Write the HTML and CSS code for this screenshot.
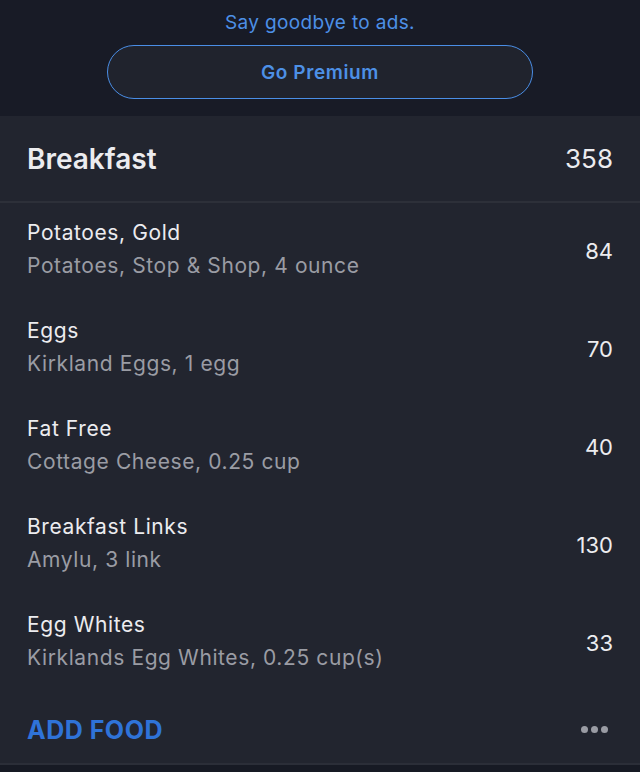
FILE: index.html
```html
<!DOCTYPE html>
<html>
<head>
<meta charset="utf-8">
<link rel="stylesheet" href="styles.css">
</head>
<body>
<div class="promo">
  <div class="promo-text">Say goodbye to ads.</div>
  <div class="promo-btn">Go Premium</div>
</div>
<div class="card">
  <div class="card-head">
    <div class="meal">Breakfast</div>
    <div class="total">358</div>
  </div>
  <div class="items">
    <div class="item">
      <div class="info"><div class="name">Potatoes, Gold</div><div class="desc">Potatoes, Stop &amp; Shop, 4 ounce</div></div>
      <div class="cal">84</div>
    </div>
    <div class="item">
      <div class="info"><div class="name">Eggs</div><div class="desc">Kirkland Eggs, 1 egg</div></div>
      <div class="cal">70</div>
    </div>
    <div class="item">
      <div class="info"><div class="name">Fat Free</div><div class="desc">Cottage Cheese, 0.25 cup</div></div>
      <div class="cal">40</div>
    </div>
    <div class="item">
      <div class="info"><div class="name">Breakfast Links</div><div class="desc">Amylu, 3 link</div></div>
      <div class="cal">130</div>
    </div>
    <div class="item">
      <div class="info"><div class="name">Egg Whites</div><div class="desc">Kirklands Egg Whites, 0.25 cup(s)</div></div>
      <div class="cal">33</div>
    </div>
  </div>
  <div class="card-foot">
    <div class="add">ADD FOOD</div>
    <div class="dots"><span></span><span></span><span></span></div>
  </div>
</div>
<div class="after"></div>
</body>
</html>
```
FILE: styles.css
```css
* { box-sizing: border-box; }
html, body { margin: 0; padding: 0; }
body {
  width: 640px;
  height: 772px;
  overflow: hidden;
  background: #171a24;
  font-family: Inter, "Noto Sans", sans-serif;
  -webkit-font-smoothing: antialiased;
}
.promo {
  height: 116px;
  background: #181b26;
  display: flex;
  flex-direction: column;
  align-items: center;
  padding-top: 11px;
}
.promo-text {
  color: #4d90e6;
  font-size: 19px;
  letter-spacing: 0.35px;
  line-height: 24px;
}
.promo-btn {
  margin-top: 10px;
  width: 426px;
  height: 54px;
  border: 1.5px solid #4a8ee6;
  border-radius: 27px;
  background: #20232d;
  color: #4d90e6;
  font-size: 19px;
  letter-spacing: 0.6px;
  font-weight: 600;
  display: flex;
  align-items: center;
  justify-content: center;
}
.card {
  background: #22252f;
  height: 649px;
  border-bottom: 2px solid #2b2e38;
  display: flex;
  flex-direction: column;
}
.card-head {
  height: 87px;
  border-bottom: 2px solid #2d3039;
  display: flex;
  align-items: center;
  justify-content: space-between;
  padding: 0 27px 0 27px;
}
.meal {
  color: #ececef;
  font-size: 28px;
  font-weight: 600;
}
.total {
  color: #ececef;
  font-size: 26px;
}
.items {
  display: flex;
  flex-direction: column;
  padding-top: 13px;
}
.item {
  height: 97.8px;
  display: flex;
  justify-content: space-between;
  align-items: center;
  padding: 0 27px;
  padding-bottom: 30px;
}
.info { display: flex; flex-direction: column; gap: 7px; }
.name {
  color: #ececef;
  font-size: 21px;
  letter-spacing: 0.6px;
  line-height: 26px;
}
.desc {
  color: #9a9ca4;
  font-size: 21px;
  letter-spacing: 0.6px;
  line-height: 26px;
}
.cal {
  color: #ececef;
  font-size: 22px;
  padding-top: 3px;
}
.card-foot {
  display: flex;
  align-items: center;
  justify-content: space-between;
  padding: 0 32px 0 27px;
  margin-top: 10px;
}
.add {
  color: #2f73d8;
  font-size: 25px;
  font-weight: 700;
  letter-spacing: 0.5px;
}
.dots { display: flex; gap: 3px; }
.dots span {
  width: 7px; height: 7px; border-radius: 50%;
  background: #9a9ca4;
}
```
